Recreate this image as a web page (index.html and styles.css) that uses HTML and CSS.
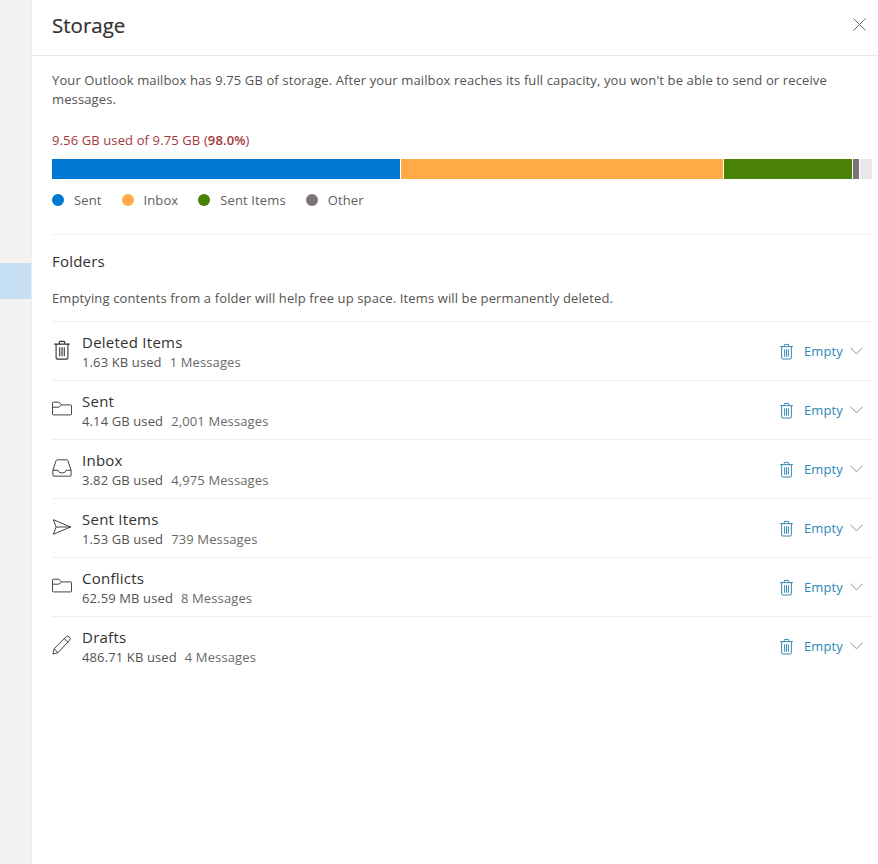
FILE: index.html
```html
<!DOCTYPE html>
<html lang="en">
<head>
    <meta charset="UTF-8">
    <meta name="viewport" content="width=device-width, initial-scale=1.0">
    <title>Storage</title>
    <link rel="stylesheet" href="styles.css">
</head>
<body>
    <svg class="icon-defs" width="0" height="0">
        <defs>
            <symbol id="trash" viewBox="0 0 20 22">
                <path d="M1.500 4.500h17M7 4.500V2.500q0-1 1-1h4q1 0 1 1v2M3.500 4.500v15q0 1.500 1.500 1.500h10q1.500 0 1.500-1.500v-15M7.500 8v10M10 8v10M12.500 8v10" fill="none" stroke="currentColor" stroke-width="1.200"/>
            </symbol>
            <symbol id="folder" viewBox="0 0 22 16">
                <path d="M1.500 14.500q-1 0-1-1V1.500q0-1 1-1h6l3 3h10q1 0 1 1v9q0 1-1 1zM.5 6h7l3-2.500" fill="none" stroke="currentColor" stroke-width="1"/>
            </symbol>
            <symbol id="inbox" viewBox="0 0 22 20">
                <path d="M1 12.500L4.500 2q.3-1 1.300-1h10.400q1 0 1.300 1L21 12.500V18q0 1-1 1H2q-1 0-1-1zM1 12.500h5.500q.5 3 4.500 3t4.500-3H21" fill="none" stroke="currentColor" stroke-width="1"/>
            </symbol>
            <symbol id="send" viewBox="0 0 22 18">
                <path d="M1.500 1L20.500 9 1.500 17 4.500 9zM4.500 9h16" fill="none" stroke="currentColor" stroke-width="1"/>
            </symbol>
            <symbol id="pencil" viewBox="0 0 22 22">
                <path d="M1 21l1.500-6L15.500 2q1.500-1.500 3.500 0t.5 3.500L6.500 19.500zM2.500 15l4 4.500M13.500 4l4.500 4.500" fill="none" stroke="currentColor" stroke-width="1"/>
            </symbol>
            <symbol id="chevron" viewBox="0 0 14 8">
                <path d="M.5.500L7 7l6.500-6.500" fill="none" stroke="currentColor" stroke-width="1"/>
            </symbol>
        </defs>
    </svg>

    <div class="layout">
        <div class="rail">
            <div class="rail-selected"></div>
        </div>

        <main class="panel">
            <header class="panel-header">
                <h1>Storage</h1>
                <svg class="close" viewBox="0 0 14 14"><path d="M.5.500l13 13M13.500.500l-13 13" fill="none" stroke="currentColor" stroke-width="1"/></svg>
            </header>

            <div class="panel-body">
                <p class="intro">Your Outlook mailbox has 9.75 GB of storage. After your mailbox reaches its full capacity, you won't be able to send or receive messages.</p>

                <p class="usage">9.56 GB used of 9.75 GB (<b>98.0%</b>)</p>

                <div class="bar">
                    <span class="seg seg-sent"></span>
                    <span class="seg seg-inbox"></span>
                    <span class="seg seg-items"></span>
                    <span class="seg seg-other"></span>
                    <span class="seg seg-free"></span>
                </div>

                <ul class="legend">
                    <li><span class="dot dot-sent"></span>Sent</li>
                    <li><span class="dot dot-inbox"></span>Inbox</li>
                    <li><span class="dot dot-items"></span>Sent Items</li>
                    <li><span class="dot dot-other"></span>Other</li>
                </ul>

                <section class="folders">
                    <h2>Folders</h2>
                    <p class="folders-note">Emptying contents from a folder will help free up space. Items will be permanently deleted.</p>

                    <div class="folder-row">
                        <svg class="folder-icon icon-trash"><use href="#trash"/></svg>
                        <div class="folder-info">
                            <div class="folder-name">Deleted Items</div>
                            <div class="folder-meta"><span>1.63 KB used</span><span>1 Messages</span></div>
                        </div>
                        <div class="empty"><svg class="empty-icon"><use href="#trash"/></svg>Empty</div>
                        <svg class="chevron"><use href="#chevron"/></svg>
                    </div>

                    <div class="folder-row">
                        <svg class="folder-icon"><use href="#folder"/></svg>
                        <div class="folder-info">
                            <div class="folder-name">Sent</div>
                            <div class="folder-meta"><span>4.14 GB used</span><span>2,001 Messages</span></div>
                        </div>
                        <div class="empty"><svg class="empty-icon"><use href="#trash"/></svg>Empty</div>
                        <svg class="chevron"><use href="#chevron"/></svg>
                    </div>

                    <div class="folder-row">
                        <svg class="folder-icon"><use href="#inbox"/></svg>
                        <div class="folder-info">
                            <div class="folder-name">Inbox</div>
                            <div class="folder-meta"><span>3.82 GB used</span><span>4,975 Messages</span></div>
                        </div>
                        <div class="empty"><svg class="empty-icon"><use href="#trash"/></svg>Empty</div>
                        <svg class="chevron"><use href="#chevron"/></svg>
                    </div>

                    <div class="folder-row">
                        <svg class="folder-icon"><use href="#send"/></svg>
                        <div class="folder-info">
                            <div class="folder-name">Sent Items</div>
                            <div class="folder-meta"><span>1.53 GB used</span><span>739 Messages</span></div>
                        </div>
                        <div class="empty"><svg class="empty-icon"><use href="#trash"/></svg>Empty</div>
                        <svg class="chevron"><use href="#chevron"/></svg>
                    </div>

                    <div class="folder-row">
                        <svg class="folder-icon"><use href="#folder"/></svg>
                        <div class="folder-info">
                            <div class="folder-name">Conflicts</div>
                            <div class="folder-meta"><span>62.59 MB used</span><span>8 Messages</span></div>
                        </div>
                        <div class="empty"><svg class="empty-icon"><use href="#trash"/></svg>Empty</div>
                        <svg class="chevron"><use href="#chevron"/></svg>
                    </div>

                    <div class="folder-row">
                        <svg class="folder-icon"><use href="#pencil"/></svg>
                        <div class="folder-info">
                            <div class="folder-name">Drafts</div>
                            <div class="folder-meta"><span>486.71 KB used</span><span>4 Messages</span></div>
                        </div>
                        <div class="empty"><svg class="empty-icon"><use href="#trash"/></svg>Empty</div>
                        <svg class="chevron"><use href="#chevron"/></svg>
                    </div>
                </section>
            </div>
        </main>
    </div>
</body>
</html>
```

FILE: styles.css
```css
body {
    margin: 0;
    padding: 0;
    background-color: #fff;
    color: #323130;
    font-family: 'Open Sans', 'Noto Sans', sans-serif;
    font-size: 13px;
    letter-spacing: 0.12px;
    overflow: hidden;
}

p, h1, h2, ul {
    margin: 0;
    padding: 0;
}

.icon-defs {
    display: block;
    height: 0;
}

.layout {
    display: flex;
    height: 864px;
}

.rail {
    width: 31px;
    flex-shrink: 0;
    padding-top: 263px;
    box-sizing: border-box;
    background-color: #f3f2f1;
}

.rail-selected {
    height: 36px;
    background-color: #c7e0f4;
}

.panel {
    flex: 1;
    min-width: 0;
    border-left: 1px solid #ebebeb;
}

.panel-header {
    display: flex;
    align-items: center;
    justify-content: space-between;
    height: 55px;
    padding: 0 12px 0 20px;
    border-bottom: 1px solid #e8e8e8;
}

h1 {
    font-size: 20.5px;
    font-weight: 400;
    letter-spacing: 0;
    color: #323130;
    margin-bottom: 6px;
    -webkit-text-stroke: 0.2px #323130;
}

.close {
    width: 13px;
    height: 13px;
    margin-top: -6px;
    color: #605e5c;
}

.panel-body {
    padding: 15px 6px 0 20px;
}

.intro {
    line-height: 19px;
    height: 39px;
    color: #555351;
}

.usage {
    margin-top: 21px;
    line-height: 18px;
    color: #a4373a;
}

.usage b {
    font-weight: 600;
}

.bar {
    display: flex;
    gap: 1px;
    height: 20px;
    margin-top: 10px;
}

.seg {
    display: block;
}

.seg-sent {
    width: 348px;
    background-color: #0078d4;
}

.seg-inbox {
    width: 322px;
    background-color: #ffaa44;
}

.seg-items {
    width: 128px;
    background-color: #498205;
}

.seg-other {
    width: 6px;
    background-color: #7a7574;
}

.seg-free {
    flex: 1;
    background-color: #e8e8e8;
}

.legend {
    display: flex;
    align-items: flex-start;
    list-style: none;
    height: 56px;
    padding-top: 12px;
    box-sizing: border-box;
    border-bottom: 1px solid #f0f0f0;
    color: #605e5c;
    line-height: 18px;
}

.legend li {
    display: flex;
    align-items: center;
    margin-right: 20px;
}

.dot {
    width: 12px;
    height: 12px;
    border-radius: 50%;
    margin-right: 10px;
}

.dot-sent {
    background-color: #0078d4;
}

.dot-inbox {
    background-color: #ffaa44;
}

.dot-items {
    background-color: #498205;
}

.dot-other {
    background-color: #7a7574;
}

.folders h2 {
    margin-top: 16px;
    font-size: 15px;
    font-weight: 400;
    letter-spacing: 0.2px;
    line-height: 20px;
}

.folders-note {
    margin-top: 18px;
    margin-bottom: 14px;
    line-height: 18px;
    color: #555351;
}

.folder-row {
    display: flex;
    align-items: center;
    height: 58px;
    border-top: 1px solid #eeeeee;
}

.folder-icon {
    width: 20px;
    height: 20px;
    flex-shrink: 0;
    margin-right: 10px;
    margin-bottom: 2px;
    color: #323130;
}

.folder-info {
    flex: 1;
    min-width: 0;
    padding-top: 1px;
}

.folder-name {
    font-size: 15px;
    letter-spacing: 0.25px;
    line-height: 20px;
    margin-bottom: 1px;
    color: #323130;
}

.folder-meta {
    display: flex;
    gap: 8px;
    line-height: 19px;
    color: #6b6967;
}

.folder-meta span:first-child {
    color: #555351;
}

.empty {
    display: flex;
    align-items: center;
    color: #2b88b8;
    margin-right: 7px;
}

.empty-icon {
    width: 15px;
    height: 17px;
    margin-right: 10px;
    color: #1f7aa8;
}

.chevron {
    width: 13px;
    height: 8px;
    margin-right: 9px;
    color: #8a8886;
}
```
